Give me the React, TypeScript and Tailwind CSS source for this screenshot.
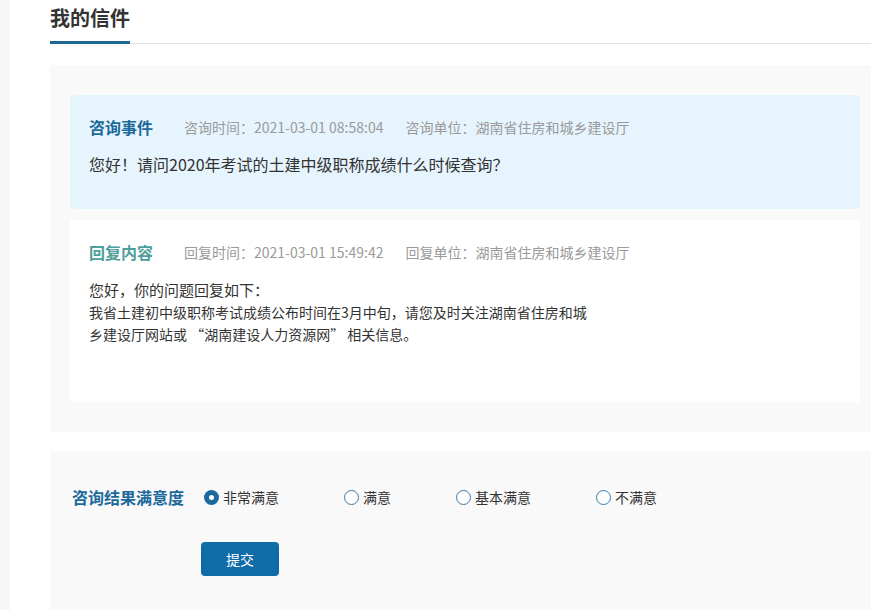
import { useState } from 'react';

const options = ['非常满意', '满意', '基本满意', '不满意'];

function Radio({
  label,
  checked,
  onClick,
}: {
  label: string;
  checked: boolean;
  onClick: () => void;
}) {
  return (
    <button
      type="button"
      onClick={onClick}
      className="mr-[65px] flex items-center gap-[4px] text-[14px] text-[#333]"
    >
      {checked ? (
        <span className="flex size-[15px] items-center justify-center rounded-full bg-[#1a6a9c]">
          <span className="size-[5px] rounded-full bg-white" />
        </span>
      ) : (
        <span className="size-[15px] rounded-full border border-[#3c7aa6] bg-white" />
      )}
      <span>{label}</span>
    </button>
  );
}

export default function App() {
  const [choice, setChoice] = useState(0);

  return (
    <div
      className="flex min-h-[610px] bg-white"
      style={{ fontFamily: '"Noto Sans CJK SC", "Noto Sans", sans-serif' }}
    >
      <div className="w-[10px] shrink-0 bg-[#f7f7f7]" />
      <main className="ml-[40px] flex-1 overflow-hidden">
        <div className="flex border-b border-[#e2e2e2]">
          <h1 className="-mb-px mt-[4px] border-b-[3px] border-[#1b6795] pb-[9px] text-[20px] font-bold leading-[28px] text-[#333]">
            我的信件
          </h1>
        </div>

        <section className="mt-[21px] flex flex-col gap-[11px] bg-[#f9f9f9] py-[30px] pl-[20px] pr-[11px]">
          <div className="h-[114px] rounded-[3px] bg-[#e6f4fd] px-[19px] pt-[20px]">
            <div className="flex items-center text-[14px] leading-[24px] text-[#9a9a9a]">
              <span className="mr-[31px] text-[16px] font-bold text-[#1c6a9c]">
                咨询事件
              </span>
              <span className="mr-[22px]">咨询时间：2021-03-01 08:58:04</span>
              <span>咨询单位：湖南省住房和城乡建设厅</span>
            </div>
            <p className="mt-[13px] text-[16px] leading-[24px] text-[#333]">
              您好！请问2020年考试的土建中级职称成绩什么时候查询？
            </p>
          </div>

          <div className="h-[182px] rounded-[3px] bg-white px-[19px] pt-[20px]">
            <div className="flex items-center text-[14px] leading-[24px] text-[#9a9a9a]">
              <span className="mr-[31px] text-[16px] font-bold text-[#4e9e9b]">
                回复内容
              </span>
              <span className="mr-[22px]">回复时间：2021-03-01 15:49:42</span>
              <span>回复单位：湖南省住房和城乡建设厅</span>
            </div>
            <div className="mt-[15px] text-[14px] leading-[22px] text-[#333]">
              <div className="text-[15px]">您好，你的问题回复如下：</div>
              <div>我省土建初中级职称考试成绩公布时间在3月中旬，请您及时关注湖南省住房和城</div>
              <div>乡建设厅网站或 “湖南建设人力资源网” 相关信息。</div>
            </div>
          </div>
        </section>

        <section className="mt-[19px] h-[170px] bg-[#f9f9f9] pl-[22px] pt-[34px]">
          <div className="flex items-center">
            <span className="w-[132px] text-[16px] font-bold leading-[24px] text-[#1c6a9c]">
              咨询结果满意度
            </span>
            {options.map((o, i) => (
              <Radio
                key={o}
                label={o}
                checked={choice === i}
                onClick={() => setChoice(i)}
              />
            ))}
          </div>
          <button
            type="button"
            className="ml-[129px] mt-[33px] h-[34px] w-[78px] rounded-[4px] bg-[#106ca6] text-[14px] text-white"
          >
            提交
          </button>
        </section>
      </main>
    </div>
  );
}
